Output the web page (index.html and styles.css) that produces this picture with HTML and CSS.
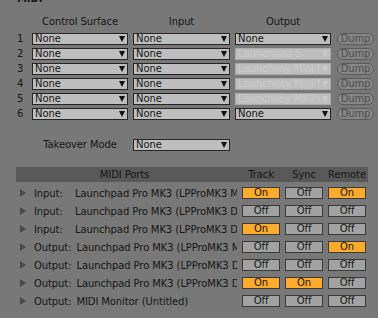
FILE: index.html
```html
<!DOCTYPE html>
<html lang="en">
<head>
    <meta charset="UTF-8">
    <title>MIDI Preferences</title>
    <link rel="stylesheet" href="styles.css">
</head>
<body>
    <div class="title">MIDI</div>

    <div class="surfaces">
        <div></div>
        <div class="col-head">Control Surface</div>
        <div class="col-head">Input</div>
        <div class="col-head">Output</div>
        <div></div>

        <div class="num">1</div>
        <div class="select"><span>None</span><i class="arrow"></i></div>
        <div class="select"><span>None</span><i class="arrow"></i></div>
        <div class="select"><span>None</span><i class="arrow"></i></div>
        <div class="dump">Dump</div>

        <div class="num">2</div>
        <div class="select"><span>None</span><i class="arrow"></i></div>
        <div class="select"><span>None</span><i class="arrow"></i></div>
        <div class="select disabled"><span>Launchpad S</span><i class="arrow"></i></div>
        <div class="dump">Dump</div>

        <div class="num">3</div>
        <div class="select"><span>None</span><i class="arrow"></i></div>
        <div class="select"><span>None</span><i class="arrow"></i></div>
        <div class="select disabled"><span>Launchkey Mini MK3</span><i class="arrow"></i></div>
        <div class="dump">Dump</div>

        <div class="num">4</div>
        <div class="select"><span>None</span><i class="arrow"></i></div>
        <div class="select"><span>None</span><i class="arrow"></i></div>
        <div class="select disabled"><span>Launchkey Mini MK3</span><i class="arrow"></i></div>
        <div class="dump">Dump</div>

        <div class="num">5</div>
        <div class="select"><span>None</span><i class="arrow"></i></div>
        <div class="select"><span>None</span><i class="arrow"></i></div>
        <div class="select disabled"><span>Launchkey MK2 49</span><i class="arrow"></i></div>
        <div class="dump">Dump</div>

        <div class="num">6</div>
        <div class="select"><span>None</span><i class="arrow"></i></div>
        <div class="select"><span>None</span><i class="arrow"></i></div>
        <div class="select"><span>None</span><i class="arrow"></i></div>
        <div class="dump">Dump</div>
    </div>

    <div class="takeover-row">
        <div></div>
        <div class="takeover-label">Takeover Mode</div>
        <div class="select"><span>None</span><i class="arrow"></i></div>
    </div>

    <div class="ports">
        <div class="ports-head">
            <div class="ports-name">MIDI Ports</div>
            <div class="ports-col">Track</div>
            <div class="ports-col">Sync</div>
            <div class="ports-col">Remote</div>
        </div>

        <div class="port">
            <i class="expand"></i>
            <span class="kind">Input:</span>
            <span class="name">Launchpad Pro MK3 (LPProMK3 MIDI)</span>
            <span class="toggle on">On</span>
            <span class="toggle">Off</span>
            <span class="toggle on">On</span>
        </div>
        <div class="port">
            <i class="expand"></i>
            <span class="kind">Input:</span>
            <span class="name">Launchpad Pro MK3 (LPProMK3 DIN)</span>
            <span class="toggle">Off</span>
            <span class="toggle">Off</span>
            <span class="toggle">Off</span>
        </div>
        <div class="port">
            <i class="expand"></i>
            <span class="kind">Input:</span>
            <span class="name">Launchpad Pro MK3 (LPProMK3 DAW)</span>
            <span class="toggle on">On</span>
            <span class="toggle">Off</span>
            <span class="toggle">Off</span>
        </div>
        <div class="port">
            <i class="expand"></i>
            <span class="kind">Output:</span>
            <span class="name">Launchpad Pro MK3 (LPProMK3 MIDI)</span>
            <span class="toggle">Off</span>
            <span class="toggle">Off</span>
            <span class="toggle on">On</span>
        </div>
        <div class="port">
            <i class="expand"></i>
            <span class="kind">Output:</span>
            <span class="name">Launchpad Pro MK3 (LPProMK3 DIN)</span>
            <span class="toggle">Off</span>
            <span class="toggle">Off</span>
            <span class="toggle">Off</span>
        </div>
        <div class="port">
            <i class="expand"></i>
            <span class="kind">Output:</span>
            <span class="name">Launchpad Pro MK3 (LPProMK3 DAW)</span>
            <span class="toggle on">On</span>
            <span class="toggle on">On</span>
            <span class="toggle">Off</span>
        </div>
        <div class="port">
            <i class="expand"></i>
            <span class="kind">Output:</span>
            <span class="name">MIDI Monitor (Untitled)</span>
            <span class="toggle">Off</span>
            <span class="toggle">Off</span>
            <span class="toggle">Off</span>
        </div>
    </div>
</body>
</html>
```

FILE: styles.css
```css
body {
    font-family: 'DejaVu Sans', sans-serif;
    font-size: 10px;
    letter-spacing: -0.1px;
    background-color: #787878;
    color: #161616;
    margin: 0;
    width: 378px;
    height: 318px;
    overflow: hidden;
}

.title {
    font-weight: bold;
    line-height: 12px;
    margin-top: -7px;
    padding-left: 17px;
}

/* control surface table */
.surfaces,
.takeover-row {
    display: grid;
    grid-template-columns: 11px 96px 97px 96px 38px;
    grid-auto-rows: 12px;
    column-gap: 5px;
    row-gap: 3px;
    padding-left: 16px;
}

.surfaces {
    grid-template-rows: 14px;
    margin-top: 11px;
}

.takeover-row {
    margin-top: 19px;
}

.col-head {
    text-align: center;
    line-height: 12px;
}

.num {
    line-height: 12px;
    padding-left: 1px;
}

.select {
    display: flex;
    align-items: center;
    box-sizing: border-box;
    height: 12px;
    background-color: #bebebe;
    border: 1px solid #262626;
    padding: 0 2px 0 2px;
    line-height: 10px;
    overflow: hidden;
    white-space: nowrap;
}

.select span {
    flex-grow: 1;
    overflow: hidden;
}

.arrow {
    width: 0;
    height: 0;
    border-left: 3px solid transparent;
    border-right: 3px solid transparent;
    border-top: 6px solid #111;
    margin-left: 2px;
    flex-shrink: 0;
}

.select.disabled {
    border-color: #ababab;
    color: #cbcbcb;
}

.select.disabled .arrow {
    border-top-color: #cbcbcb;
}

.dump {
    box-sizing: border-box;
    height: 12px;
    margin-left: 1px;
    border: 1px solid #5c5c5c;
    border-radius: 6px;
    background-color: #858585;
    color: #505050;
    text-align: center;
    line-height: 10px;
}

.takeover-label {
    text-align: center;
    line-height: 12px;
}

/* midi ports table */
.ports {
    margin: 16px 10px 0 16px;
}

.ports-head {
    display: flex;
    align-items: center;
    height: 15px;
    background-color: #595959;
    padding-right: 2px;
    margin-bottom: 2px;
}

.ports-name {
    flex-grow: 1;
    text-align: center;
    padding-right: 4px;
}

.ports-col {
    width: 38px;
    margin-left: 5px;
    text-align: center;
}

.port {
    display: flex;
    align-items: center;
    height: 18px;
    padding-left: 4px;
    padding-right: 2px;
}

.expand {
    width: 0;
    height: 0;
    border-top: 4px solid transparent;
    border-bottom: 4px solid transparent;
    border-left: 6px solid #4a4a4a;
    margin-right: 8px;
}

.kind {
    min-width: 36px;
    margin-right: 5px;
}

.name {
    flex: 1 1 0;
    min-width: 0;
    overflow: hidden;
    white-space: nowrap;
}

.toggle {
    box-sizing: border-box;
    width: 38px;
    height: 12px;
    margin-left: 5px;
    flex-shrink: 0;
    border: 1px solid #3a3a3a;
    background-color: #a2a2a2;
    text-align: center;
    line-height: 10px;
}

.toggle.on {
    background-color: #ffab2b;
}
```
